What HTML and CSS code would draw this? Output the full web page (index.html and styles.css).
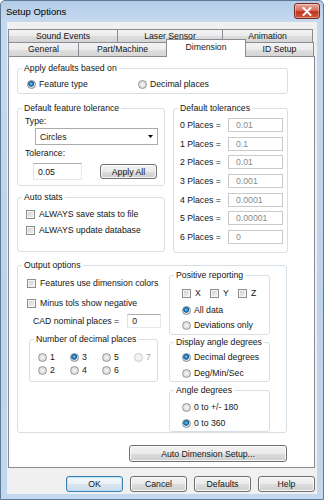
FILE: index.html
```html
<!DOCTYPE html>
<html>
<head>
<meta charset="utf-8">
<title>Setup Options</title>
<link rel="stylesheet" href="styles.css">
</head>
<body>
<div class="window">
  <div class="titlebar">
    <span class="title">Setup Options</span>
    <div class="close">
      <svg width="10" height="9" viewBox="0 0 10 9"><path d="M1.5 1 L8.5 8 M8.5 1 L1.5 8" stroke="#fff" stroke-width="2" stroke-linecap="round"/></svg>
    </div>
  </div>
  <div class="client">
    <div class="tabrow back">
      <div class="tab t-sound">Sound Events</div>
      <div class="tab t-laser">Laser Sensor</div>
      <div class="tab t-anim">Animation</div>
    </div>
    <div class="tabrow front">
      <div class="tab t-general">General</div>
      <div class="tab t-part">Part/Machine</div>
      <div class="tab active t-dim">Dimension</div>
      <div class="tab t-id">ID Setup</div>
    </div>
    <div class="page">
      <fieldset class="gb g-apply">
        <legend>Apply defaults based on</legend>
        <div class="apply-body">
          <label class="opt o-feature"><span class="rb on"></span>Feature type</label>
          <label class="opt"><span class="rb"></span>Decimal places</label>
        </div>
      </fieldset>

      <div class="rowb">
        <div class="colb">
          <fieldset class="gb g-feat">
            <legend>Default feature tolerance</legend>
            <div class="feat-body">
              <div class="lbl">Type:</div>
              <div class="combo"><span>Circles</span><svg width="5" height="3" viewBox="0 0 5 3"><path d="M0 0 H5 L2.5 3 Z" fill="#000"/></svg></div>
              <div class="lbl l-tol">Tolerance:</div>
              <div class="tol-row">
                <div class="tbox t-tol">0.05</div>
                <div class="btn b-apply">Apply All</div>
              </div>
            </div>
          </fieldset>
          <fieldset class="gb g-auto">
            <legend>Auto stats</legend>
            <div class="auto-body">
              <label class="opt"><span class="cb"></span>ALWAYS save stats to file</label>
              <label class="opt"><span class="cb"></span>ALWAYS update database</label>
            </div>
          </fieldset>
        </div>
        <fieldset class="gb g-tols">
          <legend>Default tolerances</legend>
          <div class="tols-body">
            <div class="trow"><span class="tl">0 Places =</span><span class="tbox dim">0.01</span></div>
            <div class="trow"><span class="tl">1 Places =</span><span class="tbox dim">0.1</span></div>
            <div class="trow"><span class="tl">2 Places =</span><span class="tbox dim">0.01</span></div>
            <div class="trow"><span class="tl">3 Places =</span><span class="tbox dim">0.001</span></div>
            <div class="trow"><span class="tl">4 Places =</span><span class="tbox dim">0.0001</span></div>
            <div class="trow"><span class="tl">5 Places =</span><span class="tbox dim">0.00001</span></div>
            <div class="trow"><span class="tl">6 Places =</span><span class="tbox dim">0</span></div>
          </div>
        </fieldset>
      </div>

      <fieldset class="gb g-out">
        <legend>Output options</legend>
        <div class="out-body">
          <div class="out-left">
            <label class="opt"><span class="cb"></span>Features use dimension colors</label>
            <label class="opt o-minus"><span class="cb"></span>Minus tols show negative</label>
            <div class="cad-row"><span>CAD nominal places =</span><span class="tbox t-cad">0</span></div>
            <fieldset class="gb g-dec">
              <legend>Number of decimal places</legend>
              <div class="dec-grid">
                <label class="opt"><span class="rb"></span>1</label>
                <label class="opt"><span class="rb on"></span>3</label>
                <label class="opt"><span class="rb"></span>5</label>
                <label class="opt off"><span class="rb"></span>7</label>
                <label class="opt"><span class="rb"></span>2</label>
                <label class="opt"><span class="rb"></span>4</label>
                <label class="opt"><span class="rb"></span>6</label>
              </div>
            </fieldset>
          </div>
          <div class="out-right">
            <fieldset class="gb g-pos">
              <legend>Positive reporting</legend>
              <div class="pos-body">
                <div class="xyz">
                  <label class="opt"><span class="cb"></span>X</label>
                  <label class="opt"><span class="cb"></span>Y</label>
                  <label class="opt"><span class="cb"></span>Z</label>
                </div>
                <label class="opt o-all"><span class="rb on"></span>All data</label>
                <label class="opt o-dev"><span class="rb"></span>Deviations only</label>
              </div>
            </fieldset>
            <fieldset class="gb g-disp">
              <legend>Display angle degrees</legend>
              <div class="disp-body">
                <label class="opt"><span class="rb on"></span>Decimal degrees</label>
                <label class="opt"><span class="rb"></span>Deg/Min/Sec</label>
              </div>
            </fieldset>
            <fieldset class="gb g-ang">
              <legend>Angle degrees</legend>
              <div class="ang-body">
                <label class="opt"><span class="rb"></span>0 to +/- 180</label>
                <label class="opt"><span class="rb on"></span>0 to 360</label>
              </div>
            </fieldset>
          </div>
        </div>
      </fieldset>

      <div class="btn b-auto">Auto Dimension Setup...</div>
    </div>
    <div class="dlg-buttons">
      <div class="btn b-dlg default">OK</div>
      <div class="btn b-dlg">Cancel</div>
      <div class="btn b-dlg">Defaults</div>
      <div class="btn b-dlg">Help</div>
    </div>
  </div>
</div>
</body>
</html>
```

FILE: styles.css
```css
* { box-sizing: border-box; }
html, body { margin: 0; padding: 0; }
body {
  width: 324px;
  height: 500px;
  font-family: "Liberation Sans", Arial, sans-serif;
  font-size: 8.7px;
  color: #151515;
  background: #fff;
  overflow: hidden;
}

.window {
  width: 324px;
  height: 500px;
  display: flex;
  flex-direction: column;
  border: 1px solid #5e7a99;
  border-radius: 5px 5px 0 0;
  background: linear-gradient(180deg, #b4cde8 0px, #c6daef 22px, #bcd3ec 60%, #c3d8ee 100%);
}

.titlebar {
  height: 21px;
  display: flex;
  justify-content: space-between;
  align-items: flex-start;
  padding: 0 3px 0 5px;
}
.title {
  font-size: 9.5px;
  line-height: 21px;
  color: #000;
}
.close {
  margin-top: 2px;
  width: 26px;
  height: 16px;
  border: 1px solid #7a2a23;
  border-radius: 3px;
  background: linear-gradient(180deg, #e9a99c 0%, #d7705e 45%, #c1331f 55%, #cf5b3f 100%);
  box-shadow: inset 0 0 0 1px rgba(255,255,255,0.35);
  display: flex;
  align-items: center;
  justify-content: center;
}

.client {
  flex: 1;
  margin: 0 6px 5px 6px;
  padding: 7px 2px 0 1px;
  background: #f0f0f0;
  display: flex;
  flex-direction: column;
}

/* tabs */
.tabrow { display: flex; }
.tabrow.back { height: 13px; }
.tabrow.front { height: 15px; margin-bottom: -1px; align-items: flex-end; }
.tab {
  border: 1px solid #898c95;
  border-bottom: none;
  margin-right: -1px;
  background: linear-gradient(180deg, #f3f3f3 0%, #ebebeb 50%, #dedede 50%, #d4d4d4 100%);
  text-align: center;
  color: #151515;
}
.tabrow.back .tab { height: 13px; line-height: 12px; }
.tabrow.front .tab { height: 15px; line-height: 13px; }
.tabrow.front .tab.active {
  height: 18px;
  line-height: 14px;
  background: #fff;
  position: relative;
  z-index: 1;
}
.t-sound { width: 110px; }
.t-laser { width: 106px; }
.t-anim { width: 91px; }
.t-general { width: 71px; }
.t-part { width: 89px; }
.t-dim { width: 80px; }
.t-id { width: 69px; margin-right: 0; }

.page {
  width: 307px;
  height: 412px;
  background: #fff;
  border: 1px solid #898c95;
  padding: 6px 0 0 8px;
  display: flex;
  flex-direction: column;
  align-items: flex-start;
}

/* group boxes */
.gb {
  margin: 0;
  padding: 0;
  min-width: 0;
  border: 1px solid #d5dfe5;
  border-radius: 3px;
}
.gb legend {
  margin-left: 4px;
  padding: 0 2px;
  height: 11px;
  line-height: 11px;
  color: #151515;
}

.opt {
  display: flex;
  align-items: center;
  height: 12px;
  line-height: 12px;
  white-space: nowrap;
}
.opt.off { color: #a0a0a0; }

.rb {
  flex: none;
  width: 9px;
  height: 9px;
  margin-right: 3px;
  border-radius: 50%;
  border: 1px solid #939393;
  background: radial-gradient(circle at 50% 50%, #f6f6f6 0, #e6e6e6 2px, #cfcfcf 100%);
}
.rb.on {
  border-color: #7f8a94;
  background: radial-gradient(circle at 45% 40%, #8fd7f7 0, #2c8ed0 1.3px, #0f5a92 2.6px, #dde4ea 3.2px, #f2f2f2 100%);
}
.opt.off .rb { border-color: #c8c8c8; background: #f2f2f2; }

.cb {
  flex: none;
  width: 9px;
  height: 9px;
  margin-right: 4px;
  border: 1px solid #8e8f8f;
  background: linear-gradient(135deg, #c9cdd2 0%, #eaeaea 70%, #f6f6f6 100%);
  box-shadow: inset 0 0 0 1px #f4f4f4;
}

.tbox {
  display: flex;
  align-items: center;
  background: #fff;
  border: 1px solid #abadb3;
  border-color: #abadb3 #e3e9ef #e3e9ef #e2e3ea;
  color: #151515;
  padding-left: 4px;
}
.tbox.dim { color: #8a8a8a; border-color: #c9c9c9; }

.btn {
  display: flex;
  align-items: center;
  justify-content: center;
  border: 1px solid #707070;
  border-radius: 3px;
  background: linear-gradient(180deg, #f2f2f2 0%, #ebebeb 50%, #dddddd 50%, #cfcfcf 100%);
  box-shadow: inset 0 0 0 1px rgba(255,255,255,0.8);
  color: #151515;
}

/* Apply defaults */
.g-apply { width: 271px; height: 31px; }
.apply-body { display: flex; padding: 4px 0 0 9px; }
.o-feature { width: 111px; }

/* row B */
.rowb { display: flex; gap: 8px; margin-top: 9px; }
.colb { width: 148px; display: flex; flex-direction: column; }
.g-feat { height: 83px; }
.feat-body { padding: 2px 0 0 7px; }
.lbl { height: 11px; line-height: 11px; }
.l-tol { margin-top: 3px; }
.combo {
  margin: 1px 0 0 10px;
  width: 123px;
  height: 17px;
  border: 1px solid #acacac;
  background: #fff;
  display: flex;
  align-items: center;
  justify-content: space-between;
  padding: 0 4px 0 4px;
}
.tol-row { display: flex; align-items: center; margin-top: 4px; }
.t-tol { margin-left: 8px; width: 49px; height: 17px; }
.b-apply { margin-left: 18px; width: 57px; height: 15px; }

.g-auto { height: 60px; margin-top: 6px; }
.auto-body { display: flex; flex-direction: column; gap: 4px; padding: 5px 0 0 8px; }

.g-tols { width: 115px; height: 150px; }
.tols-body { display: flex; flex-direction: column; gap: 4.7px; padding: 4px 0 0 6px; }
.trow { display: flex; align-items: center; height: 14px; }
.tl { width: 48px; }
.trow .tbox { width: 55px; height: 14px; padding-left: 7px; }

/* Output options */
.g-out { width: 270px; height: 173px; margin-top: 7px; }
.out-body { display: flex; }
.out-left { width: 151px; padding: 6px 0 0 9px; display: flex; flex-direction: column; }
.o-minus { margin-top: 8px; }
.cad-row { display: flex; align-items: center; margin: 5px 0 0 6px; height: 14px; }
.t-cad { margin-left: 8px; width: 34px; height: 14px; }
.g-dec { width: 129px; height: 48px; margin: 6px 0 0 2px; }
.dec-grid {
  display: grid;
  grid-template-columns: repeat(4, 32px);
  row-gap: 1px;
  padding: 6px 0 0 8px;
}
.out-right { width: 101px; margin-top: -1px; display: flex; flex-direction: column; }
.g-pos { height: 65px; }
.pos-body { padding: 6px 0 0 12px; display: flex; flex-direction: column; }
.xyz { display: flex; }
.xyz .opt { width: 28px; }
.o-all { margin-top: 5px; }
.o-dev { margin-top: 3px; }
.g-disp { height: 45px; margin-top: 2px; }
.disp-body { padding: 3px 0 0 12px; display: flex; flex-direction: column; gap: 4px; }
.g-ang { height: 47px; margin-top: 3px; }
.ang-body { padding: 5px 0 0 12px; display: flex; flex-direction: column; gap: 4px; }

.b-auto { align-self: flex-start; margin: 12px 0 0 112px; width: 158px; height: 17px; }

/* dialog buttons */
.dlg-buttons { display: flex; justify-content: flex-end; gap: 7px; margin-top: 8px; }
.b-dlg { width: 57px; height: 16px; }
.b-dlg.default {
  border-color: #3c7fb1;
  background: linear-gradient(180deg, #f2f7fb 0%, #e9f1f8 50%, #d9e6f1 50%, #cfdcea 100%);
  box-shadow: inset 0 0 0 1px rgba(180,225,250,0.9);
}
```
